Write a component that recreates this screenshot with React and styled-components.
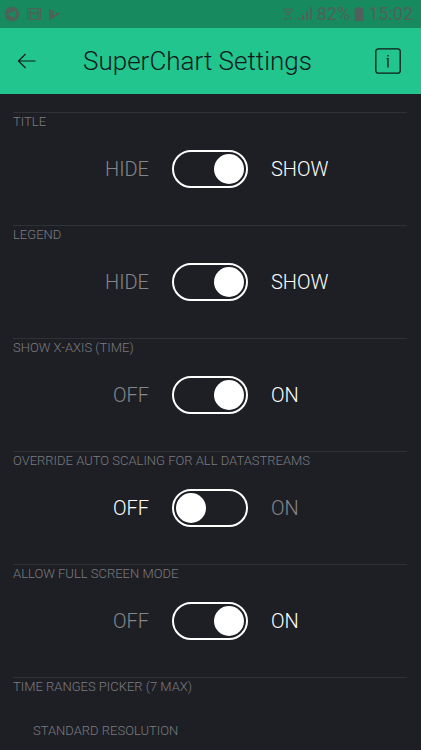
import React, { useId, useState } from "react";
import styled, { createGlobalStyle } from "styled-components";

const GlobalStyle = createGlobalStyle`
  *, *::before, *::after { box-sizing: border-box; }
  body {
    margin: 0;
    background: #1e1f24;
    font-family: Roboto, "Liberation Sans", sans-serif;
    font-weight: 300;
  }
`;

const Screen = styled.div`
  min-height: 100vh;
  background: #1e1f24;
  color: #ffffff;
`;

const StatusBar = styled.div`
  display: flex;
  align-items: center;
  justify-content: space-between;
  height: 28px;
  padding: 0 8px 0 4px;
  background: #188a60;
  color: #4f615a;
`;

const StatusGroup = styled.div`
  display: flex;
  align-items: center;
  gap: ${({ $gap }) => $gap}px;
`;

const StatusText = styled.span`
  font-size: 18px;
  line-height: 28px;
  font-weight: 400;
`;

const Header = styled.header`
  display: flex;
  align-items: center;
  justify-content: space-between;
  height: 66px;
  padding: 0 18px 0 12px;
  background: #23c58e;
  color: #101a1a;
`;

const Title = styled.h1`
  flex: 1;
  margin: 0;
  padding-right: 20px;
  font-size: 26px;
  line-height: 32px;
  font-weight: 300;
  text-align: center;
  white-space: nowrap;
`;

const IconButton = styled.button`
  display: flex;
  align-items: center;
  justify-content: center;
  width: 30px;
  height: 30px;
  padding: 0;
  border: 0;
  background: none;
  color: inherit;
  cursor: pointer;
`;

const Content = styled.main`
  padding: 18px 14px 0 13px;
`;

const Section = styled.section`
  border-top: 1px solid #303136;
`;

const SectionTitle = styled.h2`
  margin: 0;
  font-size: 13px;
  line-height: 18px;
  font-weight: 300;
  color: #7a7b80;
  white-space: nowrap;
`;

const SubTitle = styled.h3`
  margin: 26px 0 0 20px;
  font-size: 13px;
  line-height: 18px;
  font-weight: 300;
  color: #7a7b80;
`;

const ToggleRow = styled.div`
  display: grid;
  grid-template-columns: 1fr 76px 1fr;
  align-items: center;
  column-gap: 23px;
  padding: 19px 0 37px;
`;

const Choice = styled.label`
  font-size: 20px;
  line-height: 38px;
  color: ${({ $active }) => ($active ? "#ffffff" : "#85868b")};
  text-align: ${({ $side }) => ($side === "left" ? "right" : "left")};
  cursor: pointer;
`;

const Switch = styled.input.attrs({ type: "checkbox", role: "switch" })`
  appearance: none;
  display: flex;
  align-items: center;
  width: 76px;
  height: 38px;
  margin: 0;
  padding: 0 2px;
  border: 2px solid #ffffff;
  border-radius: 19px;
  background: transparent;
  cursor: pointer;

  &::before {
    content: "";
    width: 30px;
    height: 30px;
    border-radius: 50%;
    background: #ffffff;
  }

  &:checked {
    justify-content: flex-end;
  }
`;

const SETTINGS = [
  { title: "TITLE", off: "HIDE", on: "SHOW", value: true },
  { title: "LEGEND", off: "HIDE", on: "SHOW", value: true },
  { title: "SHOW X-AXIS (TIME)", off: "OFF", on: "ON", value: true },
  { title: "OVERRIDE AUTO SCALING FOR ALL DATASTREAMS", off: "OFF", on: "ON", value: false },
  { title: "ALLOW FULL SCREEN MODE", off: "OFF", on: "ON", value: true },
];

function ToggleSection({ title, off, on, value }) {
  const [checked, setChecked] = useState(value);
  const id = useId();
  return (
    <Section>
      <SectionTitle id={`${id}-title`}>{title}</SectionTitle>
      <ToggleRow>
        <Choice htmlFor={id} $side="left" $active={!checked}>{off}</Choice>
        <Switch
          id={id}
          aria-labelledby={`${id}-title`}
          checked={checked}
          onChange={(event) => setChecked(event.target.checked)}
        />
        <Choice htmlFor={id} $side="right" $active={checked}>{on}</Choice>
      </ToggleRow>
    </Section>
  );
}

const TelegramIcon = () => (
  <svg width="16" height="16" viewBox="0 0 16 16" aria-hidden="true">
    <circle cx="8" cy="8" r="7.3" fill="currentColor" />
    <path d="M3 8.2 12.4 4.2 10.8 12 8.2 10.2 6.9 11.6 6.2 9.2Z" fill="#188a60" />
  </svg>
);

const MailIcon = () => (
  <svg width="14" height="12" viewBox="0 0 14 12" fill="none" stroke="currentColor" aria-hidden="true">
    <rect x="0.6" y="0.6" width="12.8" height="10.8" strokeWidth="1.2" />
    <path d="M3.2 10V3.2L7 6.4 10.8 3.2V10" strokeWidth="1.4" />
  </svg>
);

const PlayIcon = () => (
  <svg width="13" height="13" viewBox="0 0 13 13" fill="currentColor" aria-hidden="true">
    <path d="M1 .5 6.6 3.8 4.8 5.8 6.3 7.3 10 4.2 12 5.8 1 12.5Z" />
  </svg>
);

const WifiIcon = () => (
  <svg width="12" height="14" viewBox="0 0 12 14" fill="none" stroke="currentColor" strokeWidth="1.2" aria-hidden="true">
    <path d="M1 3.8Q6 0 11 3.8M2.8 6Q6 3.6 9.2 6M4.3 8Q6 6.8 7.7 8" />
    <path d="M3 12.5 5 10.5M3 10.8V12.5H4.6M9 10.5 7 12.5M9 12.2V10.5H7.4" strokeWidth="1" />
  </svg>
);

const SignalIcon = () => (
  <svg width="15" height="14" viewBox="0 0 15 14" fill="currentColor" aria-hidden="true">
    <path d="M0 11h2v2H0zM4 8h2v5H4zM8 4h2v9H8zM12 0h2v13h-2z" />
  </svg>
);

const BatteryIcon = () => (
  <svg width="10" height="14" viewBox="0 0 10 14" fill="currentColor" aria-hidden="true">
    <path d="M3 0h4v1.6h2.5V14H.5V1.6H3z" />
  </svg>
);

const BackIcon = () => (
  <svg width="20" height="18" viewBox="0 0 20 18" fill="none" stroke="currentColor" strokeWidth="1.2" aria-hidden="true">
    <path d="M18.5 9H1.5M8.5 2 1.5 9l7 7" />
  </svg>
);

const InfoIcon = () => (
  <svg width="26" height="26" viewBox="0 0 26 26" fill="none" stroke="currentColor" strokeWidth="1.3" aria-hidden="true">
    <rect x="0.8" y="0.8" width="24.4" height="24.4" rx="2.5" />
    <path d="M11.6 10.6H13V19.4M13 7v1.6" />
  </svg>
);

export default function App() {
  return (
    <>
      <GlobalStyle />
      <Screen>
        <StatusBar>
          <StatusGroup $gap={7}>
            <TelegramIcon />
            <MailIcon />
            <PlayIcon />
          </StatusGroup>
          <StatusGroup $gap={4}>
            <WifiIcon />
            <SignalIcon />
            <StatusText>82%</StatusText>
            <BatteryIcon />
            <StatusText>15:02</StatusText>
          </StatusGroup>
        </StatusBar>
        <Header>
          <IconButton type="button" aria-label="Back"><BackIcon /></IconButton>
          <Title>SuperChart Settings</Title>
          <IconButton type="button" aria-label="Information"><InfoIcon /></IconButton>
        </Header>
        <Content>
          {SETTINGS.map((setting) => (
            <ToggleSection key={setting.title} {...setting} />
          ))}
          <Section>
            <SectionTitle>TIME RANGES PICKER (7 MAX)</SectionTitle>
            <SubTitle>STANDARD RESOLUTION</SubTitle>
          </Section>
        </Content>
      </Screen>
    </>
  );
}
